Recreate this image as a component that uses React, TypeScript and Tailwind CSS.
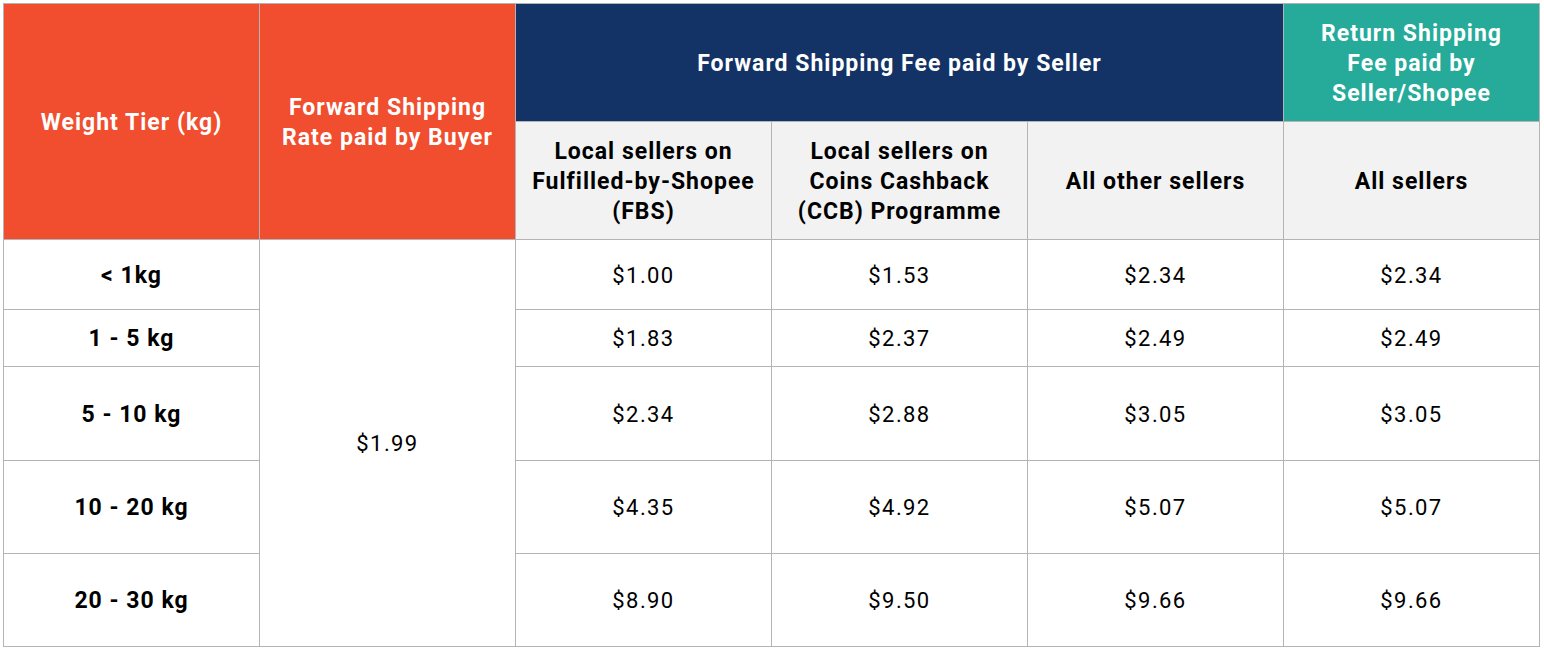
import React from "react";

const rows = [
  { w: "< 1kg", h: "h-[70px]", v: ["$1.00", "$1.53", "$2.34", "$2.34"] },
  { w: "1 - 5 kg", h: "h-[57px]", v: ["$1.83", "$2.37", "$2.49", "$2.49"] },
  { w: "5 - 10 kg", h: "h-[94px]", v: ["$2.34", "$2.88", "$3.05", "$3.05"] },
  { w: "10 - 20 kg", h: "h-[93px]", v: ["$4.35", "$4.92", "$5.07", "$5.07"] },
  { w: "20 - 30 kg", h: "h-[93px]", v: ["$8.90", "$9.50", "$9.66", "$9.66"] },
];

export default function App() {
  const b = "border border-[#b4b4b4] pt-[2px] pb-0";
  const hd = "font-bold text-[23px] tracking-[1px]";
  const dt = "text-[22px] tracking-[1.4px]";
  return (
    <div className="bg-white w-[1544px] h-[649px] pl-[3px] pt-[3px]" style={{ fontFamily: "Roboto, 'Noto Sans', sans-serif" }}>
      <table className="table-fixed border-collapse w-[1536px] leading-[30px] text-center text-black">
        <colgroup>
          <col className="w-[256px]" />
          <col className="w-[256px]" />
          <col className="w-[256px]" />
          <col className="w-[256px]" />
          <col className="w-[256px]" />
          <col className="w-[256px]" />
        </colgroup>
        <tbody>
          <tr className="h-[118px]">
            <td rowSpan={2} className={`${b} ${hd} bg-[#f04e2e] text-white`}>Weight Tier (kg)</td>
            <td rowSpan={2} className={`${b} ${hd} bg-[#f04e2e] text-white px-5`}>Forward Shipping Rate paid by Buyer</td>
            <td colSpan={3} className={`${b} ${hd} bg-[#133366] text-white`}>Forward Shipping Fee paid by Seller</td>
            <td className={`${b} ${hd} bg-[#26aa99] text-white px-[30px]`}>Return Shipping Fee paid by Seller/Shopee</td>
          </tr>
          <tr className="h-[118px]">
            <td className={`${b} ${hd} bg-[#f2f2f2] px-3`}>Local sellers on Fulfilled-by-Shopee (FBS)</td>
            <td className={`${b} ${hd} bg-[#f2f2f2] px-5`}>Local sellers on Coins Cashback (CCB) Programme</td>
            <td className={`${b} ${hd} bg-[#f2f2f2]`}>All other sellers</td>
            <td className={`${b} ${hd} bg-[#f2f2f2]`}>All sellers</td>
          </tr>
          {rows.map((r, i) => (
            <tr key={r.w} className={r.h}>
              <td className={`${b} ${hd}`}>{r.w}</td>
              {i === 0 && (
                <td rowSpan={5} className={`${b} ${dt}`}>$1.99</td>
              )}
              {r.v.map((v, j) => (
                <td key={j} className={`${b} ${dt}`}>{v}</td>
              ))}
            </tr>
          ))}
        </tbody>
      </table>
    </div>
  );
}
